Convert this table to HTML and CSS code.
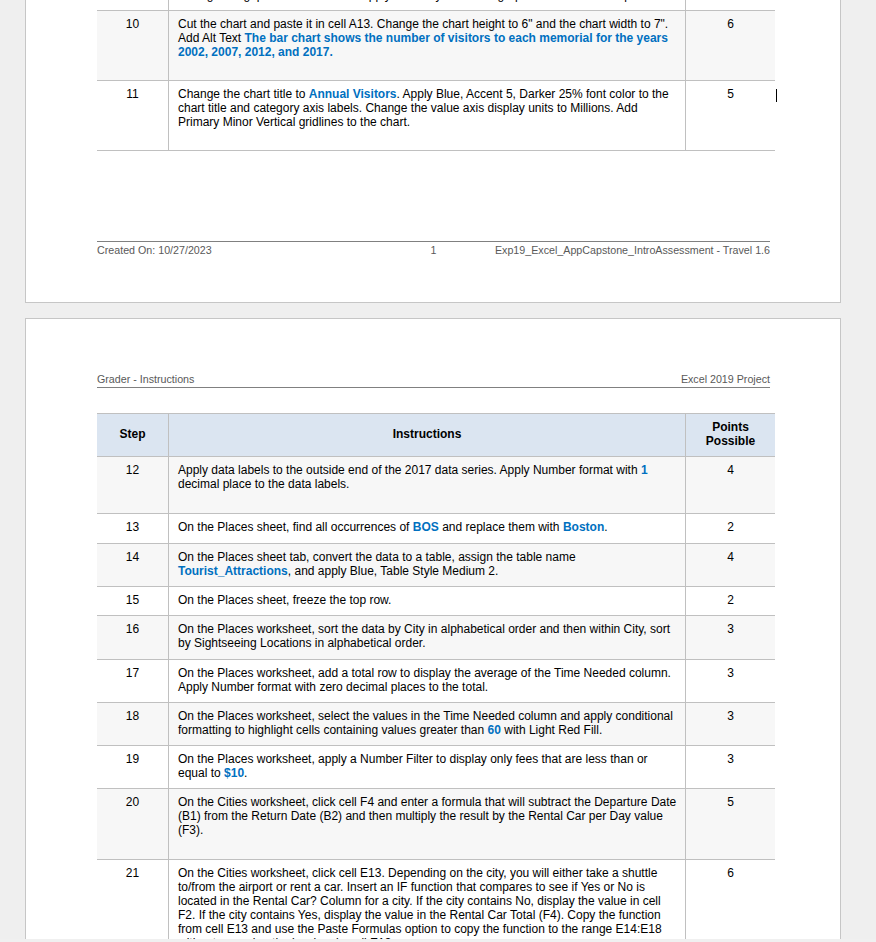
FILE: index.html
```html
<!DOCTYPE html>
<html lang="en">
<head>
  <meta charset="UTF-8">
  <title>Grader - Instructions</title>
  <link rel="stylesheet" href="styles.css">
</head>
<body>
  <div class="viewer">

    <div class="page page-first">
      <table class="grid">
        <tr>
          <td class="step">9</td>
          <td class="text">Create a clustered bar chart using the range A3:E10 on the Memorials worksheet.<br>Change the gap width to 80% and apply chart Style 4 to the graph and the chart shape.</td>
          <td class="pts">5</td>
        </tr>
        <tr class="shaded tall">
          <td class="step">10</td>
          <td class="text">Cut the chart and paste it in cell A13. Change the chart height to 6" and the chart width to 7".<br>Add Alt Text <b class="hl">The bar chart shows the number of visitors to each memorial for the years<br>2002, 2007, 2012, and 2017.</b></td>
          <td class="pts">6</td>
        </tr>
        <tr class="tall last">
          <td class="step">11</td>
          <td class="text">Change the chart title to <b class="hl">Annual Visitors</b>. Apply Blue, Accent 5, Darker 25% font color to the<br>chart title and category axis labels. Change the value axis display units to Millions. Add<br>Primary Minor Vertical gridlines to the chart.</td>
          <td class="pts caret">5</td>
        </tr>
      </table>

      <div class="doc-footer">
        <span>Created On: 10/27/2023</span>
        <span>1</span>
        <span class="right">Exp19_Excel_AppCapstone_IntroAssessment - Travel 1.6</span>
      </div>
    </div>

    <div class="page page-second">
      <div class="doc-header">
        <span>Grader - Instructions</span>
        <span>Excel 2019 Project</span>
      </div>

      <table class="grid">
        <tr class="head">
          <th class="step">Step</th>
          <th class="text">Instructions</th>
          <th class="pts">Points<br>Possible</th>
        </tr>
        <tr class="shaded tall">
          <td class="step">12</td>
          <td class="text">Apply data labels to the outside end of the 2017 data series. Apply Number format with <b class="hl">1</b><br>decimal place to the data labels.</td>
          <td class="pts">4</td>
        </tr>
        <tr class="roomy">
          <td class="step">13</td>
          <td class="text">On the Places sheet, find all occurrences of <b class="hl">BOS</b> and replace them with <b class="hl">Boston</b>.</td>
          <td class="pts">2</td>
        </tr>
        <tr class="shaded">
          <td class="step">14</td>
          <td class="text">On the Places sheet tab, convert the data to a table, assign the table name<br><b class="hl">Tourist_Attractions</b>, and apply Blue, Table Style Medium 2.</td>
          <td class="pts">4</td>
        </tr>
        <tr>
          <td class="step">15</td>
          <td class="text">On the Places sheet, freeze the top row.</td>
          <td class="pts">2</td>
        </tr>
        <tr class="shaded roomy">
          <td class="step">16</td>
          <td class="text">On the Places worksheet, sort the data by City in alphabetical order and then within City, sort<br>by Sightseeing Locations in alphabetical order.</td>
          <td class="pts">3</td>
        </tr>
        <tr>
          <td class="step">17</td>
          <td class="text">On the Places worksheet, add a total row to display the average of the Time Needed column.<br>Apply Number format with zero decimal places to the total.</td>
          <td class="pts">3</td>
        </tr>
        <tr class="shaded">
          <td class="step">18</td>
          <td class="text">On the Places worksheet, select the values in the Time Needed column and apply conditional<br>formatting to highlight cells containing values greater than <b class="hl">60</b> with Light Red Fill.</td>
          <td class="pts">3</td>
        </tr>
        <tr>
          <td class="step">19</td>
          <td class="text">On the Places worksheet, apply a Number Filter to display only fees that are less than or<br>equal to <b class="hl">$10</b>.</td>
          <td class="pts">3</td>
        </tr>
        <tr class="shaded tall">
          <td class="step">20</td>
          <td class="text">On the Cities worksheet, click cell F4 and enter a formula that will subtract the Departure Date<br>(B1) from the Return Date (B2) and then multiply the result by the Rental Car per Day value<br>(F3).</td>
          <td class="pts">5</td>
        </tr>
        <tr class="last">
          <td class="step">21</td>
          <td class="text">On the Cities worksheet, click cell E13. Depending on the city, you will either take a shuttle<br>to/from the airport or rent a car. Insert an IF function that compares to see if Yes or No is<br>located in the Rental Car? Column for a city. If the city contains No, display the value in cell<br>F2. If the city contains Yes, display the value in the Rental Car Total (F4). Copy the function<br>from cell E13 and use the Paste Formulas option to copy the function to the range E14:E18<br>without removing the borders in cell E13.</td>
          <td class="pts">6</td>
        </tr>
      </table>
    </div>

  </div>
  <div class="status-strip"></div>
</body>
</html>
```

FILE: styles.css
```css
html, body {
  height: 100%;
  overflow: hidden;
}

body {
  margin: 0;
  background: #efefef;
  font-family: "Liberation Sans", Arial, sans-serif;
  font-size: 12px;
  color: #000;
}

.viewer {
  padding: 0 35px 0 25px;
}

.page {
  width: 816px;
  background: #fff;
  border: 1px solid #c6c6c6;
  margin-top: 15px;
  padding: 54px 0 45px 71px;
  box-sizing: border-box;
}

.page-first {
  margin-top: -106px;
  padding-top: 72px;
}

/* instruction table */
.grid {
  width: 678px;
  border-collapse: separate;
  border-spacing: 0;
  line-height: 14px;
}

.grid td,
.grid th {
  border-top: 1px solid #c0c0c0;
  padding: 6px 9px 8px;
  vertical-align: top;
}

.grid .step {
  width: 53px;
  text-align: center;
}

.grid .text {
  padding-right: 2px;
  white-space: nowrap;
  border-left: 1px solid #c0c0c0;
  border-right: 1px solid #c0c0c0;
}

.grid .pts {
  width: 71px;
  text-align: center;
}

.grid .tall td {
  padding-bottom: 21px;
}

.page-second .grid .tall td {
  padding-bottom: 22px;
}

.grid .roomy td {
  padding-bottom: 9px;
}

.grid .last td {
  border-bottom: 1px solid #c0c0c0;
}

.grid .shaded td {
  background: #f7f7f7;
}

.grid .head th {
  background: #dbe5f1;
  font-weight: bold;
  vertical-align: middle;
  padding-right: 9px;
}

.hl {
  color: #0070c0;
}

.caret {
  position: relative;
}

.caret::after {
  content: "";
  position: absolute;
  right: -2px;
  top: 8px;
  width: 1px;
  height: 13px;
  background: #000;
}

/* running header / footer */
.doc-header,
.doc-footer {
  width: 673px;
  color: #595959;
  font-size: 10.7px;
  line-height: 13px;
}

.doc-header {
  display: flex;
  justify-content: space-between;
  padding-bottom: 1px;
  border-bottom: 1px solid #808080;
  margin-bottom: 25px;
}

.doc-footer {
  display: grid;
  grid-template-columns: 1fr auto 1fr;
  margin-top: 90px;
  padding-top: 2px;
  border-top: 1px solid #808080;
}

.doc-footer .right {
  text-align: right;
}

.status-strip {
  position: fixed;
  left: 0;
  right: 0;
  bottom: 0;
  height: 3px;
  background: #f0f0f0;
}
```
